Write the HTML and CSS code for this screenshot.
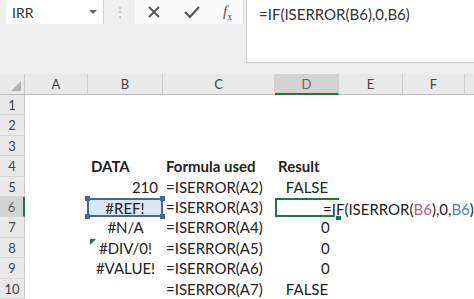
FILE: index.html
```html
<!DOCTYPE html>
<html lang="en">
<head>
  <meta charset="UTF-8">
  <title>ISERROR example</title>
  <link rel="stylesheet" href="styles.css">
</head>
<body>
  <div class="toolbar">
    <div class="namebox">
      <span>IRR</span>
      <span class="arrow"></span>
    </div>
    <div class="grip">&#8942;</div>
    <div class="buttons">
      <svg width="16" height="16" viewBox="0 0 16 16"><path d="M3 3L13 13M13 3L3 13" stroke="#555" stroke-width="1.8" fill="none"/></svg>
      <svg width="18" height="16" viewBox="0 0 18 16"><path d="M2 8L7 13L16 3" stroke="#555" stroke-width="2.2" fill="none"/></svg>
      <span class="fx"><i>f</i><sub>x</sub></span>
    </div>
    <div class="formula">=IF(ISERROR(B6),0,B6)</div>
  </div>

  <div class="sheet">
    <div class="corner"><span class="tri"></span></div>
    <div class="colhead">A</div>
    <div class="colhead">B</div>
    <div class="colhead">C</div>
    <div class="colhead active">D</div>
    <div class="colhead">E</div>
    <div class="colhead">F</div>
    <div class="colhead last"></div>

    <div class="rowhead">1</div><div></div><div></div><div></div><div></div><div></div><div></div><div></div>
    <div class="rowhead">2</div><div></div><div></div><div></div><div></div><div></div><div></div><div></div>
    <div class="rowhead">3</div><div></div><div></div><div></div><div></div><div></div><div></div><div></div>

    <div class="rowhead">4</div><div></div>
    <div class="cell bold">DATA</div>
    <div class="cell bold">Formula used</div>
    <div class="cell bold">Result</div>
    <div></div><div></div><div></div>

    <div class="rowhead">5</div><div></div>
    <div class="cell right">210</div>
    <div class="cell">=ISERROR(A2)</div>
    <div class="cell center">FALSE</div>
    <div></div><div></div><div></div>

    <div class="rowhead active">6</div><div></div>
    <div class="cell center picked">
      #REF!
      <span class="handle tl"></span><span class="handle tr"></span>
      <span class="handle bl"></span><span class="handle br"></span>
    </div>
    <div class="cell">=ISERROR(A3)</div>
    <div class="cell editing">
      <span class="edit">=IF(ISERROR(<span class="ref1">B6</span>),0,<span class="ref2">B6</span>)<span class="caret"></span></span>
      <span class="fill"></span>
    </div>
    <div></div><div></div><div></div>

    <div class="rowhead">7</div><div></div>
    <div class="cell center">#N/A</div>
    <div class="cell">=ISERROR(A4)</div>
    <div class="cell zero">0</div>
    <div></div><div></div><div></div>

    <div class="rowhead">8</div><div></div>
    <div class="cell center flag">#DIV/0!</div>
    <div class="cell">=ISERROR(A5)</div>
    <div class="cell zero">0</div>
    <div></div><div></div><div></div>

    <div class="rowhead">9</div><div></div>
    <div class="cell center">#VALUE!</div>
    <div class="cell">=ISERROR(A6)</div>
    <div class="cell zero">0</div>
    <div></div><div></div><div></div>

    <div class="rowhead">10</div><div></div>
    <div class="cell"></div>
    <div class="cell">=ISERROR(A7)</div>
    <div class="cell center">FALSE</div>
    <div></div><div></div><div></div>
  </div>
</body>
</html>
```

FILE: styles.css
```css
body {
  margin: 0;
  width: 474px;
  height: 299px;
  overflow: hidden;
  background: #ffffff;
  font-family: Lato, "Open Sans", sans-serif;
  color: #222;
}

.toolbar {
  display: flex;
  align-items: flex-start;
  height: 74px;
  background: #eeeeee;
}

.namebox {
  display: flex;
  align-items: center;
  justify-content: space-between;
  width: 98px;
  height: 24px;
  margin-left: 6px;
  padding: 0 6px;
  box-sizing: border-box;
  background: #fff;
  border-right: 1px solid #d4d4d4;
  font-size: 14px;
  color: #333;
}

.arrow {
  width: 0;
  height: 0;
  border-left: 4px solid transparent;
  border-right: 4px solid transparent;
  border-top: 4px solid #666;
}

.grip {
  width: 31px;
  text-align: center;
  color: #bbb;
  font-size: 12px;
  line-height: 24px;
}

.buttons {
  display: flex;
  align-items: center;
  justify-content: space-around;
  width: 108px;
  height: 24px;
  background: #fafafa;
  border-right: 1px solid #d4d4d4;
}

.fx {
  font-family: "Liberation Serif", serif;
  font-size: 15px;
  color: #555;
}

.fx sub {
  font-size: 10px;
}

.formula {
  flex: 1;
  height: 63px;
  margin-left: 2px;
  padding: 5px 12px;
  box-sizing: border-box;
  background: #fff;
  border-left: 1px solid #d0d0d0;
  border-bottom: 1px solid #d0d0d0;
  font-size: 15px;
  color: #333;
}

.sheet {
  display: grid;
  grid-template-columns: 25px 63px 75px 112px 64px 64px 62px 9px;
  grid-template-rows: 21px repeat(10, 20.4px);
  font-size: 15px;
}

.corner {
  position: relative;
  background: #e9e9e9;
  border-right: 1px solid #c8c8c8;
  border-bottom: 1px solid #bdbdbd;
}

.tri {
  position: absolute;
  right: 3px;
  bottom: 3px;
  border-left: 10px solid transparent;
  border-bottom: 10px solid #b5b5b5;
}

.colhead {
  background: #e9e9e9;
  border-right: 1px solid #cfcfcf;
  border-bottom: 1px solid #bdbdbd;
  text-align: center;
  font-size: 13px;
  line-height: 20px;
  color: #444;
}

.colhead.active {
  background: #d3d3d3;
  border-bottom: 2px solid #217346;
  color: #666;
}

.colhead.last {
  border-right: none;
}

.rowhead {
  background: #e9e9e9;
  border-right: 1px solid #c8c8c8;
  border-bottom: 1px solid #d6d6d6;
  text-align: center;
  font-size: 13px;
  line-height: 20px;
  color: #444;
}

.rowhead.active {
  background: #d3d3d3;
  border-right: 2px solid #217346;
  color: #666;
}

.cell {
  position: relative;
  line-height: 20px;
  padding: 0 3px;
  white-space: nowrap;
}

.bold {
  font-weight: bold;
}

.right {
  text-align: right;
  padding-right: 5px;
}

.center {
  text-align: center;
}

.zero {
  padding-left: 46px;
}

.picked {
  background: #dce6f4;
  border: 2px solid #41689f;
  margin: 1px 0 0 -1px;
  line-height: 16px;
}

.handle {
  position: absolute;
  width: 5px;
  height: 5px;
  background: #41689f;
}

.tl { left: -4px; top: -4px; }
.tr { right: -4px; top: -4px; }
.bl { left: -4px; bottom: -4px; }
.br { right: -4px; bottom: -4px; }

.flag::before {
  content: "";
  position: absolute;
  left: 2px;
  top: 1px;
  border-top: 6px solid #217346;
  border-right: 6px solid transparent;
}

.editing {
  overflow: visible;
  z-index: 2;
  border: 2px solid #217346;
  border-right: none;
  margin-top: 1px;
  line-height: 17px;
  padding: 0;
}

.edit {
  position: absolute;
  left: 46px;
  top: 0;
}

.ref1 {
  color: #b35c86;
}

.ref2 {
  color: #4f7fc0;
}

.caret {
  display: inline-block;
  width: 2px;
  height: 18px;
  margin-left: 2px;
  vertical-align: -3px;
  background: #111;
}

.fill {
  position: absolute;
  right: -3px;
  bottom: -6px;
  width: 5px;
  height: 4px;
  background: #217346;
  border: 1px solid #fff;
}
```
